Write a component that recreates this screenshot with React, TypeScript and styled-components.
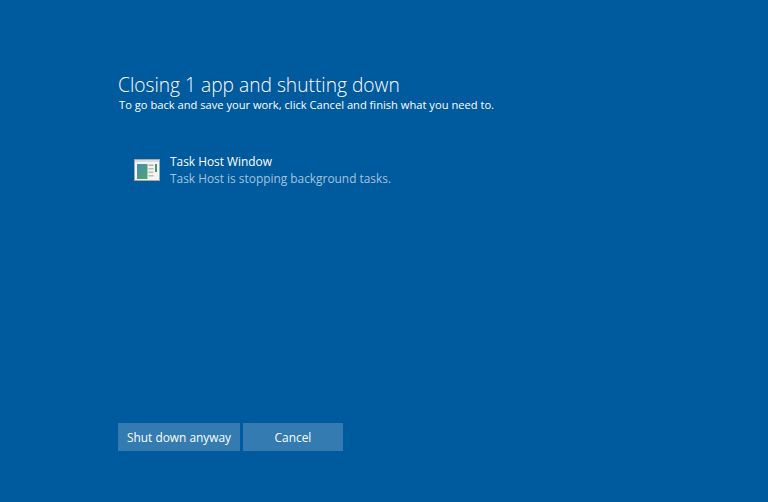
import React from 'react';
import styled, { createGlobalStyle } from 'styled-components';

const GlobalStyle = createGlobalStyle`
  html, body {
    margin: 0;
    padding: 0;
    height: 100%;
    background: #005a9e;
  }
`;

const Screen = styled.div`
  width: 768px;
  height: 502px;
  box-sizing: border-box;
  padding: 72px 0 51px 118px;
  display: flex;
  flex-direction: column;
  background: #005a9e;
  color: #fff;
  font-family: "Open Sans", "Noto Sans", sans-serif;
  overflow: hidden;
`;

const Title = styled.h1`
  margin: 0;
  font-size: 19.2px;
  font-weight: 300;
  line-height: 26px;
`;

const Subtitle = styled.p`
  margin: 0 0 0 1px;
  font-size: 11.15px;
  line-height: 14px;
`;

const AppRow = styled.div`
  display: flex;
  align-items: center;
  gap: 10px;
  margin: 41px 0 0 16px;
`;

const AppText = styled.div`
  display: flex;
  flex-direction: column;
`;

const AppName = styled.div`
  font-size: 11.9px;
  line-height: 17px;
`;

const AppStatus = styled.div`
  font-size: 11.9px;
  line-height: 17px;
  color: #a3c4de;
`;

const Actions = styled.div`
  display: flex;
  gap: 3px;
  margin-top: auto;
`;

const Button = styled.button<{ $width: number }>`
  width: ${({ $width }) => $width}px;
  height: 28px;
  padding: 0;
  border: 0;
  background: #337bb1;
  color: #fff;
  font-family: inherit;
  font-size: 11.9px;
`;

const TaskHostIcon = () => (
  <svg width="26" height="22" viewBox="0 0 26 22">
    <defs>
      <linearGradient id="pane" x1="0" y1="0" x2="1" y2="1">
        <stop offset="0" stopColor="#4a88b8" />
        <stop offset="1" stopColor="#4fa868" />
      </linearGradient>
    </defs>
    <rect width="26" height="22" fill="#f4f4f2" />
    <rect x="0.5" y="0.5" width="25" height="21" fill="none" stroke="#a6a6a6" />
    <rect x="1" y="1" width="24" height="2" fill="#d5dde4" />
    <rect x="3" y="5" width="10.5" height="15" fill="url(#pane)" />
    <rect x="14.5" y="5.5" width="5" height="1.5" fill="#b0b0b0" />
    <rect x="14.5" y="9" width="5" height="1.5" fill="#bcbcbc" />
    <rect x="14.5" y="12.5" width="5" height="1.5" fill="#bcbcbc" />
    <rect x="14.5" y="16" width="5" height="1.5" fill="#bcbcbc" />
    <rect x="21" y="5" width="2" height="8" fill="#3f9a6a" />
  </svg>
);

const App: React.FC = () => (
  <>
    <GlobalStyle />
    <Screen>
      <Title>Closing 1 app and shutting down</Title>
      <Subtitle>To go back and save your work, click Cancel and finish what you need to.</Subtitle>
      <AppRow>
        <TaskHostIcon />
        <AppText>
          <AppName>Task Host Window</AppName>
          <AppStatus>Task Host is stopping background tasks.</AppStatus>
        </AppText>
      </AppRow>
      <Actions>
        <Button $width={122}>Shut down anyway</Button>
        <Button $width={100}>Cancel</Button>
      </Actions>
    </Screen>
  </>
);

export default App;
